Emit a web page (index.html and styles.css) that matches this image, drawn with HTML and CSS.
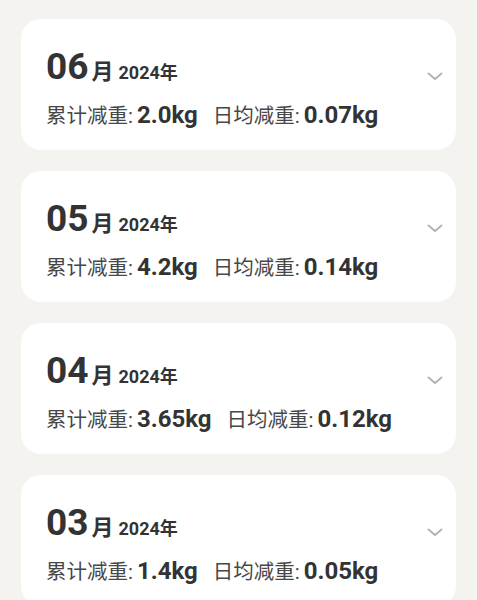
FILE: index.html
```html
<!DOCTYPE html>
<html lang="zh-CN">
<head>
<meta charset="utf-8">
<link rel="stylesheet" href="styles.css">
</head>
<body>
<div class="list">
  <div class="card">
    <div class="head">
      <div class="date"><span class="mm">06</span><span class="yue">月</span><span class="yy">2024年</span></div>
      <svg class="chev" width="16" height="16" viewBox="0 0 16 16"><path d="M1.5 8.5 L8 14 L14.5 8.5" /></svg>
    </div>
    <div class="stats"><span class="lbl">累计减重:</span><span class="val">2.0kg</span><span class="lbl gap">日均减重:</span><span class="val">0.07kg</span></div>
  </div>
  <div class="card">
    <div class="head">
      <div class="date"><span class="mm">05</span><span class="yue">月</span><span class="yy">2024年</span></div>
      <svg class="chev" width="16" height="16" viewBox="0 0 16 16"><path d="M1.5 8.5 L8 14 L14.5 8.5" /></svg>
    </div>
    <div class="stats"><span class="lbl">累计减重:</span><span class="val">4.2kg</span><span class="lbl gap">日均减重:</span><span class="val">0.14kg</span></div>
  </div>
  <div class="card">
    <div class="head">
      <div class="date"><span class="mm">04</span><span class="yue">月</span><span class="yy">2024年</span></div>
      <svg class="chev" width="16" height="16" viewBox="0 0 16 16"><path d="M1.5 8.5 L8 14 L14.5 8.5" /></svg>
    </div>
    <div class="stats"><span class="lbl">累计减重:</span><span class="val">3.65kg</span><span class="lbl gap">日均减重:</span><span class="val">0.12kg</span></div>
  </div>
  <div class="card">
    <div class="head">
      <div class="date"><span class="mm">03</span><span class="yue">月</span><span class="yy">2024年</span></div>
      <svg class="chev" width="16" height="16" viewBox="0 0 16 16"><path d="M1.5 8.5 L8 14 L14.5 8.5" /></svg>
    </div>
    <div class="stats"><span class="lbl">累计减重:</span><span class="val">1.4kg</span><span class="lbl gap">日均减重:</span><span class="val">0.05kg</span></div>
  </div>
</div>
</body>
</html>
```
FILE: styles.css
```css
html, body {
  margin: 0;
  padding: 0;
  background: #f5f3ef;
}
body {
  font-family: Roboto, "Noto Sans CJK SC", sans-serif;
  color: #333;
}
.list {
  display: flex;
  flex-direction: column;
  gap: 21px;
  padding: 19px 21px;
}
.card {
  background: #fff;
  border-radius: 20px;
  padding: 26px 13px 20px 25px;
  display: flex;
  flex-direction: column;
  gap: 13px;
}
.head {
  display: flex;
  justify-content: space-between;
  align-items: baseline;
  height: 44px;
  line-height: 44px;
}
.date {
  font-size: 37px;
  font-weight: 700;
  line-height: 44px;
  white-space: nowrap;
}
.mm {
  font-size: 37px;
}
.yue {
  font-size: 22px;
  line-height: 1;
  margin-left: 3px;
}
.yy {
  font-size: 18px;
  line-height: 1;
  margin-left: 5px;
}
.chev {
  display: block;
  align-self: flex-end;
  margin-bottom: 8px;
}
.chev path {
  fill: none;
  stroke: #b3b3b3;
  stroke-width: 2;
  stroke-linecap: round;
  stroke-linejoin: round;
}
.stats {
  font-size: 20.5px;
  line-height: 28px;
  white-space: nowrap;
}
.lbl {
  color: #474747;
  font-weight: 400;
}
.lbl.gap {
  margin-left: 15px;
}
.val {
  font-size: 24px;
  font-weight: 700;
  line-height: 1;
  margin-left: 4px;
  color: #333;
}
```
